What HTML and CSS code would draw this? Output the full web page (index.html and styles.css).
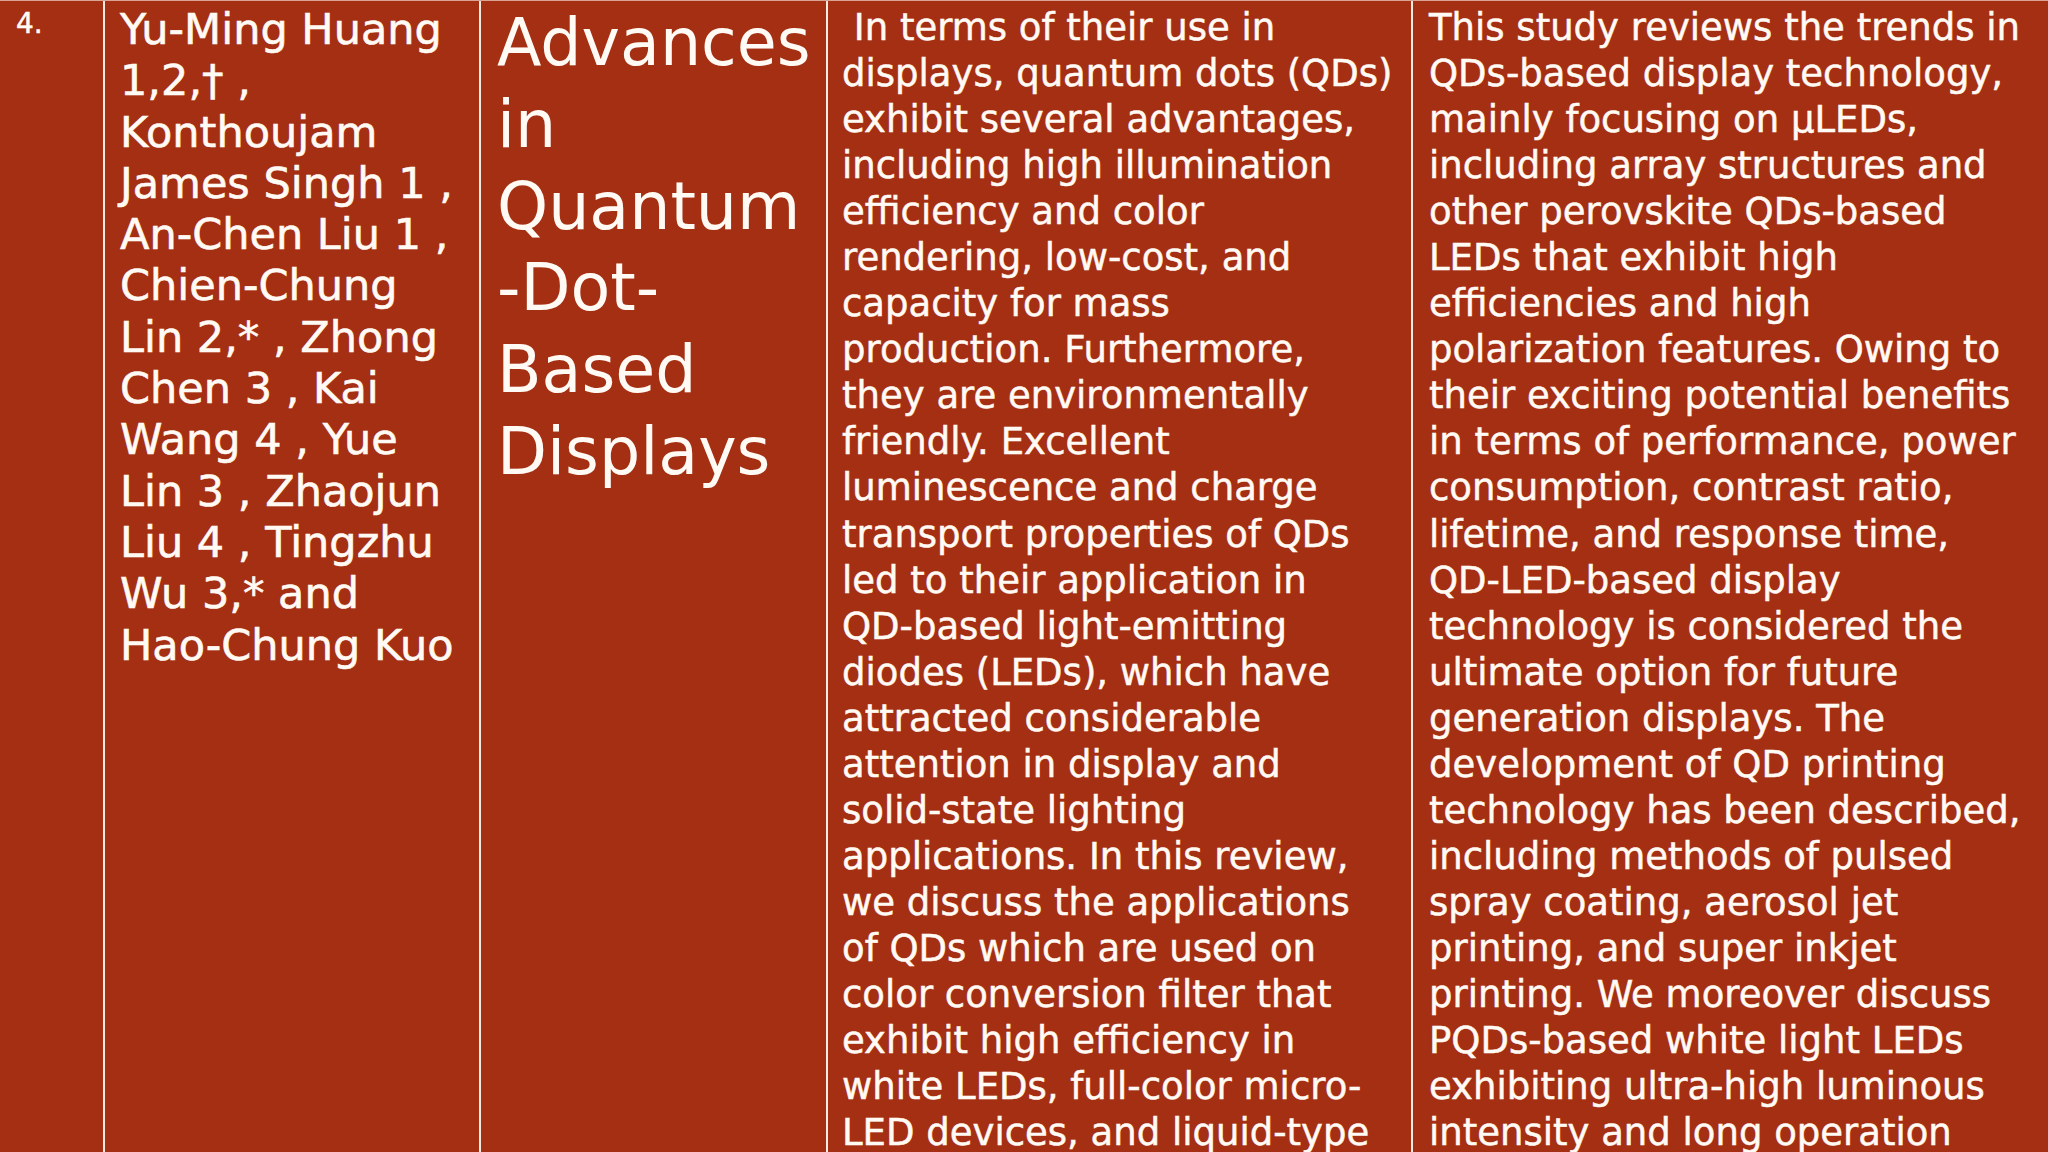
FILE: index.html
```html
<!DOCTYPE html>
<html lang="en">
<head>
<meta charset="utf-8">
<title>Quantum Dot Displays</title>
<link rel="stylesheet" href="styles.css">
</head>
<body>
<div class="table">
  <div class="cell num">4.</div>
  <div class="cell authors">Yu-Ming Huang<br>1,2,† ,<br>Konthoujam<br>James Singh 1 ,<br>An-Chen Liu 1 ,<br>Chien-Chung<br>Lin 2,* , Zhong<br>Chen 3 , Kai<br>Wang 4 , Yue<br>Lin 3 , Zhaojun<br>Liu 4 , Tingzhu<br>Wu 3,* and<br>Hao-Chung Kuo</div>
  <div class="cell title">Advances<br>in<br>Quantum<br>-Dot-<br>Based<br>Displays</div>
  <div class="cell body abstract">&nbsp;In terms of their use in<br>displays, quantum dots (QDs)<br>exhibit several advantages,<br>including high illumination<br>efficiency and color<br>rendering, low-cost, and<br>capacity for mass<br>production. Furthermore,<br>they are environmentally<br>friendly. Excellent<br>luminescence and charge<br>transport properties of QDs<br>led to their application in<br>QD-based light-emitting<br>diodes (LEDs), which have<br>attracted considerable<br>attention in display and<br>solid-state lighting<br>applications. In this review,<br>we discuss the applications<br>of QDs which are used on<br>color conversion filter that<br>exhibit high efficiency in<br>white LEDs, full-color micro-<br>LED devices, and liquid-type</div>
  <div class="cell body summary">This study reviews the trends in<br>QDs-based display technology,<br>mainly focusing on μLEDs,<br>including array structures and<br>other perovskite QDs-based<br>LEDs that exhibit high<br>efficiencies and high<br>polarization features. Owing to<br>their exciting potential benefits<br>in terms of performance, power<br>consumption, contrast ratio,<br>lifetime, and response time,<br>QD-LED-based display<br>technology is considered the<br>ultimate option for future<br>generation displays. The<br>development of QD printing<br>technology has been described,<br>including methods of pulsed<br>spray coating, aerosol jet<br>printing, and super inkjet<br>printing. We moreover discuss<br>PQDs-based white light LEDs<br>exhibiting ultra-high luminous<br>intensity and long operation</div>
</div>
</body>
</html>
```

FILE: styles.css
```css
html, body {
  margin: 0;
  padding: 0;
  width: 2048px;
  height: 1152px;
  overflow: hidden;
  background: #a52f13;
}

.table {
  display: grid;
  grid-template-columns: 103px 376px 347px 585px 637px;
  height: 1300px;
  border-top: 1px solid #d9a493;
  font-family: "DejaVu Sans", "Liberation Sans", sans-serif;
  color: #fffaf4;
  background: #a52f13;
}

.cell {
  box-sizing: border-box;
  border-left: 2px solid #f6ebe3;
  white-space: nowrap;
}

.num {
  border-left: none;
  font-size: 28px;
  line-height: 31px;
  padding: 7px 0 0 16px;
  -webkit-text-stroke: 0.5px #fffaf4;
}

.authors {
  font-size: 43px;
  line-height: 51.3px;
  padding: 3px 0 0 15px;
  -webkit-text-stroke: 0.6px #fffaf4;
}

.title {
  font-size: 65px;
  line-height: 81.8px;
  padding: 1px 0 0 16px;
}

.body {
  font-size: 37px;
  line-height: 46.05px;
  padding-top: 4px;
  -webkit-text-stroke: 0.5px #fffaf4;
}

.abstract {
  padding-left: 14px;
}

.summary {
  padding-left: 16px;
}
```
